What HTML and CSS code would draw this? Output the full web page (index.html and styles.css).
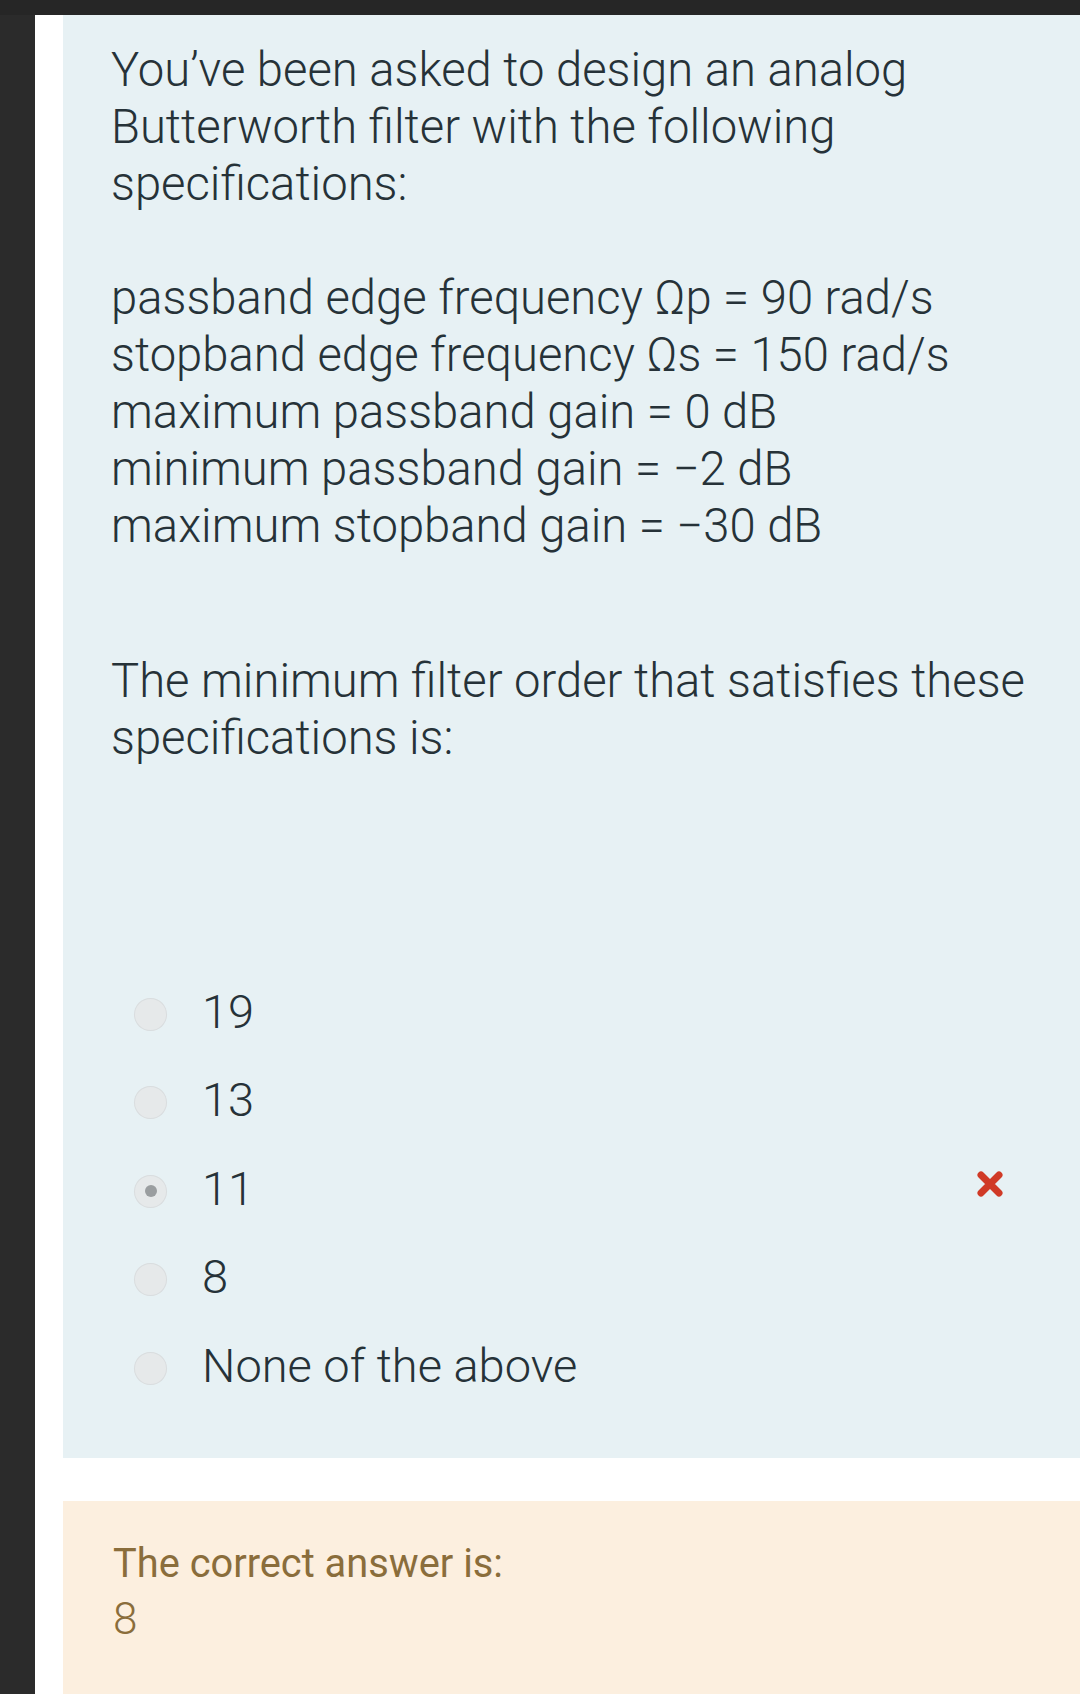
FILE: index.html
```html
<!DOCTYPE html>
<html>
<head>
<meta charset="utf-8">
<link rel="stylesheet" href="styles.css">
</head>
<body>
<div class="topbar"></div>
<div class="sheet">
  <div class="question">
    <p class="qtext">You’ve been asked to design an analog Butterworth filter with the following specifications:</p>
    <p class="specs">passband edge frequency Ωp = 90 rad/s<br>stopband edge frequency Ωs = 150 rad/s<br>maximum passband gain = 0 dB<br>minimum passband gain = −2 dB<br>maximum stopband gain = −30 dB</p>
    <p class="prompt">The minimum filter order that satisfies these specifications is:</p>
    <div class="options">
      <div class="option"><span class="radio"></span><span class="label">19</span></div>
      <div class="option"><span class="radio"></span><span class="label">13</span></div>
      <div class="option"><span class="radio checked"></span><span class="label">11</span>
        <svg class="wrong" viewBox="0 0 30 30" width="30" height="30"><path d="M6 6 L24 24 M24 6 L6 24" stroke="#d03a26" stroke-width="7" stroke-linecap="round" fill="none"/></svg>
      </div>
      <div class="option"><span class="radio"></span><span class="label">8</span></div>
      <div class="option"><span class="radio"></span><span class="label">None of the above</span></div>
    </div>
  </div>
  <div class="feedback">
    <div class="fb-title">The correct answer is:</div>
    <div class="fb-answer">8</div>
  </div>
</div>
</body>
</html>
```
FILE: styles.css
```css
html, body {
  margin: 0;
  padding: 0;
  background: #2b2b2b;
}
body {
  font-family: Roboto, "Liberation Sans", sans-serif;
  color: #263238;
  width: 1080px;
  height: 1694px;
  overflow: hidden;
}
.topbar {
  height: 15px;
  background: #262626;
}
.sheet {
  margin-left: 35px;
  background: #ffffff;
  padding-left: 28px;
  height: 1679px;
}
.question {
  background: #e7f1f4;
  padding: 27px 20px 0 48px;
  height: 1416px;
  font-weight: 300;
  font-size: 47.2px;
  line-height: 57px;
}
.question p {
  margin: 0;
}
.specs {
  margin-top: 57px !important;
}
.prompt {
  margin-top: 98px !important;
}
.options {
  margin-top: 200px;
  padding-left: 23px;
}
.option {
  display: flex;
  align-items: center;
  height: 88.5px;
  position: relative;
}
.radio {
  width: 33px;
  height: 33px;
  border-radius: 50%;
  background: #e6e9ea;
  box-shadow: inset 0 0 0 1px #d9dddf;
  display: flex;
  align-items: center;
  justify-content: center;
  margin-right: 35px;
  margin-top: 6px;
}
.radio.checked::after {
  content: "";
  width: 12px;
  height: 12px;
  border-radius: 50%;
  background: #9a9ea0;
}
.label {
  font-size: 47px;
  font-weight: 300;
}
.wrong {
  position: absolute;
  left: 841px;
  top: 25px;
}
.feedback {
  margin-top: 43px;
  background: #fcefdf;
  height: 200px;
  padding: 36px 0 0 50px;
  color: #8a6d3b;
}
.fb-title {
  font-size: 39.8px;
  font-weight: 400;
  line-height: 54px;
}
.fb-answer {
  font-size: 44px;
  font-weight: 300;
  line-height: 56px;
}
```
